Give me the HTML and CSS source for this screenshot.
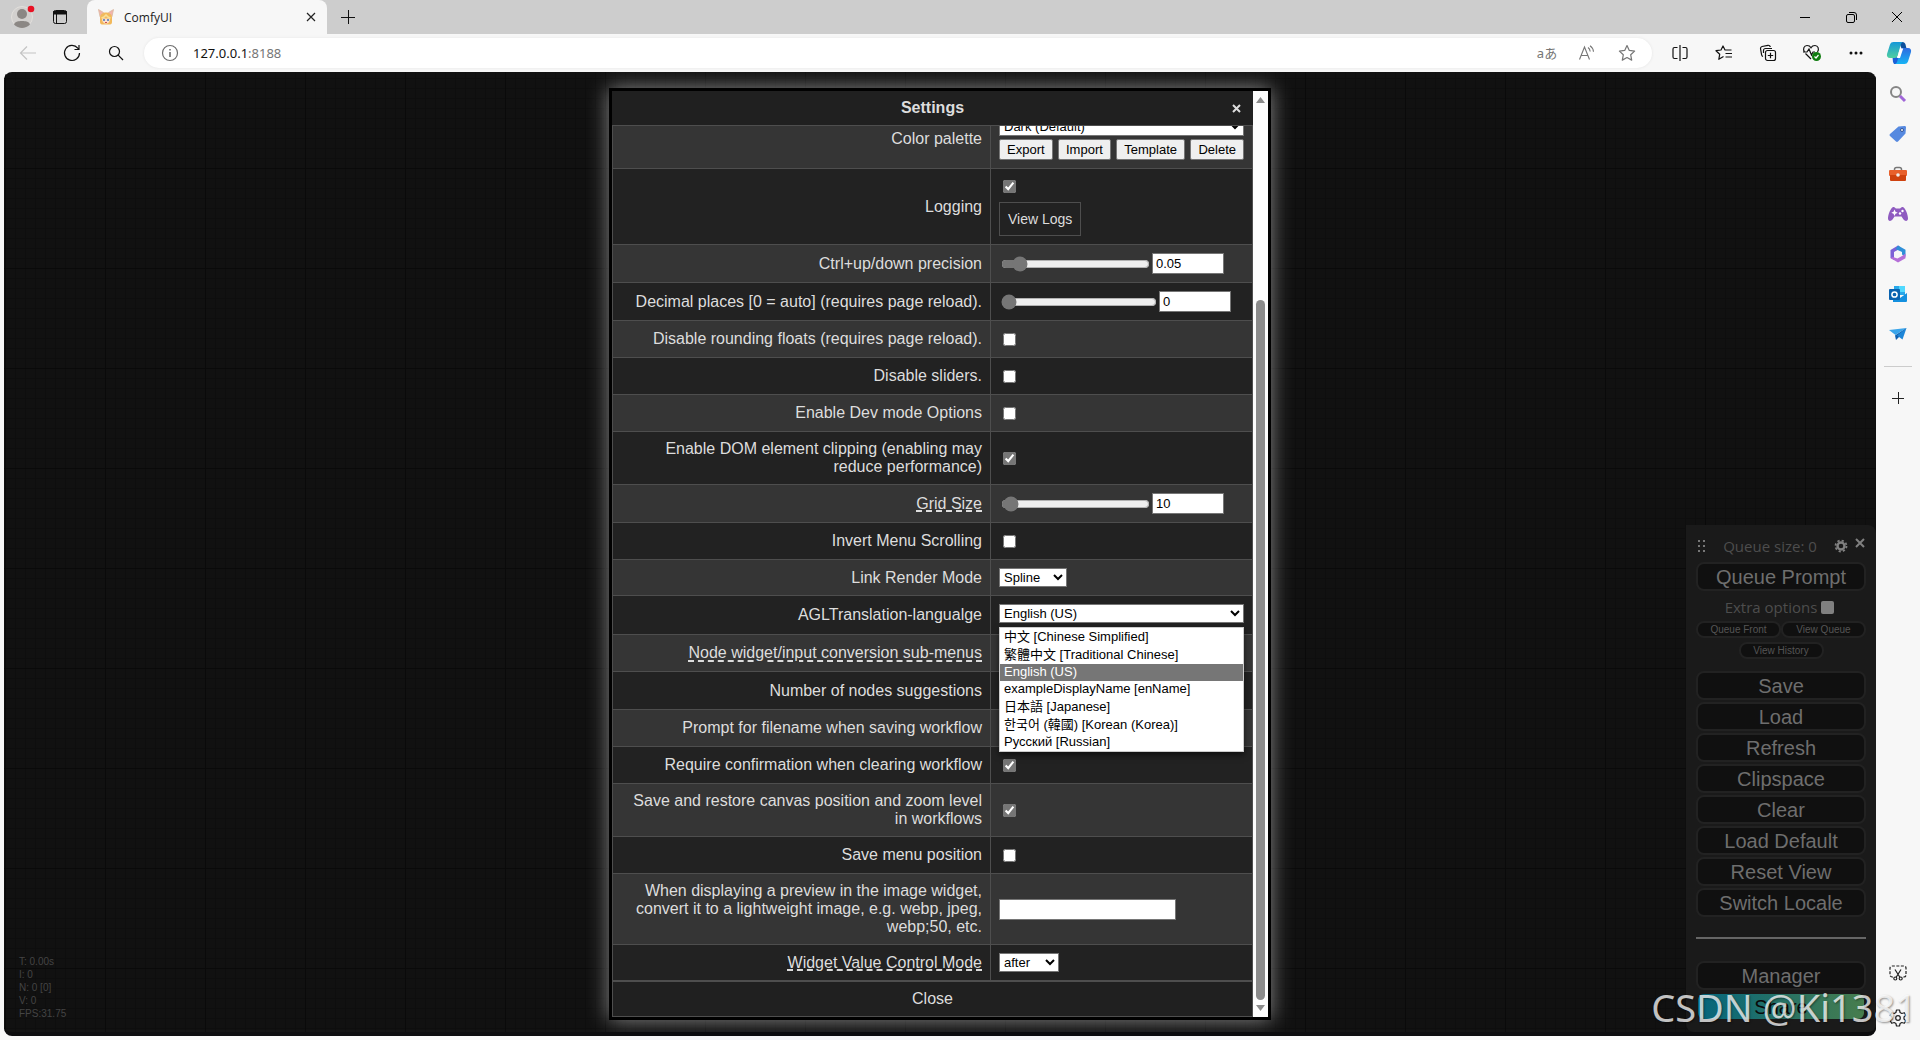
FILE: index.html
```html
<!DOCTYPE html>
<html lang="en">
<head>
<meta charset="utf-8">
<title>ComfyUI</title>
<link rel="stylesheet" href="styles.css">
</head>
<body class="browser">

<header class="tabbar">
  <button class="avatar" aria-label="Profile">
    <svg width="26" height="26" viewBox="0 0 26 26"><circle cx="13" cy="13" r="10.5" fill="#d2d0ce" stroke="#e2dfdc"/><circle cx="13" cy="10" r="5" fill="#8b8784"/><path d="M5 20.500c1-3 4-3.500 8-3.500s7 .5 8 3.500c-2 2.300-5 3.500-8 3.500s-6-1.200-8-3.500z" fill="#8b8784"/><circle cx="22" cy="5" r="3.300" fill="#e81123"/></svg>
  </button>
  <button class="tab-actions" aria-label="Tab actions">
    <svg width="16" height="16" viewBox="0 0 16 16" fill="none" stroke="#111"><rect x="1.500" y="1.500" width="13" height="13" rx="2"/><path d="M1.500 2.500h13v2.500h-13z" fill="#111"/><path d="M4.500 5v9.500"/></svg>
  </button>
  <div class="tab">
    <svg class="favicon" width="16" height="16" viewBox="0 0 16 16"><path d="M.5 .5l5 3-3.500 4zM15.500 .5l-5 3 3.500 4z" fill="#f3b3ac" stroke="#d9b9a0" stroke-width=".8"/><path d="M2 9C2 5 5 3.500 8 3.500S14 5 14 9v4c0 2-1 2.500-3 2.500H5C3 15.500 2 15 2 13z" fill="#f2b95c"/><path d="M4 9.500h8c0 3.500-1.500 5-4 5s-4-1.500-4-5z" fill="#fbe0cf"/><path d="M3.500 9C5.500 8.500 7 7.500 8 6c1 1.500 2.500 2.500 4.500 3" stroke="#f9df98" fill="none" stroke-width="1.500"/><circle cx="6" cy="11" r="1" fill="#4a78b8"/><circle cx="10" cy="11" r="1" fill="#4a78b8"/><path d="M7 13.500h2" stroke="#d0504a"/></svg>
    <span class="tab-title">ComfyUI</span>
    <button class="tab-close" aria-label="Close tab"><svg width="10" height="10" viewBox="0 0 10 10" stroke="#222" stroke-width="1.200"><path d="M1 1l8 8M9 1l-8 8"/></svg></button>
  </div>
  <button class="new-tab" aria-label="New tab"><svg width="14" height="14" viewBox="0 0 14 14" stroke="#111"><path d="M7.500 0v14M0 7.500h14"/></svg></button>
  <div class="window-buttons">
    <button class="window-button" aria-label="Minimize"><svg width="10" height="10" viewBox="0 0 10 10" stroke="#000"><path d="M0 5.500h10"/></svg></button>
    <button class="window-button" aria-label="Restore"><svg width="11" height="11" viewBox="0 0 11 11" fill="none" stroke="#000"><rect x=".5" y="2.500" width="8" height="8" rx="1.500"/><path d="M3 .5h5a2.500 2.500 0 0 1 2.500 2.500v5"/></svg></button>
    <button class="window-button" aria-label="Close"><svg width="10" height="10" viewBox="0 0 10 10" stroke="#000"><path d="M0 0l10 10M10 0L0 10"/></svg></button>
  </div>
</header>

<nav class="toolbar">
  <button class="tool" aria-label="Back"><svg width="18" height="16" viewBox="0 0 18 16" fill="none" stroke="#c4c4c4" stroke-width="1.200"><path d="M17 8H1.500M8 1.500L1.500 8 8 14.500"/></svg></button>
  <button class="tool" aria-label="Refresh"><svg width="18" height="18" viewBox="0 0 18 18" fill="none" stroke="#111" stroke-width="1.200"><path d="M16.500 9A7.500 7.500 0 1 1 14.800 4.200L16 5.500M16 1v4.500h-4.500"/></svg></button>
  <button class="tool" aria-label="Search"><svg width="16" height="16" viewBox="0 0 16 16" fill="none" stroke="#111" stroke-width="1.200"><circle cx="6.500" cy="6.500" r="5"/><path d="M10.200 10.200L15 15"/></svg></button>
  <div class="address">
    <svg width="18" height="18" viewBox="0 0 18 18" fill="none" stroke="#6e6e6e" stroke-width="1.200"><circle cx="9" cy="9" r="7.500"/><path d="M9 8v5" stroke-width="1.600"/><path d="M9 5v1.600" stroke-width="1.600"/></svg>
    <span class="url">127.0.0.1<span class="port">:8188</span></span>
    <button class="in-address" aria-label="Translate"><span class="translate">aあ</span></button>
    <button class="in-address" aria-label="Read aloud"><svg width="18" height="16" viewBox="0 0 18 16" fill="none" stroke="#767676" stroke-width="1.100"><path d="M1.500 14.500L6.500 2l5 12.500M3.200 10.500h6.600M10 2.500c1.500 1 2 2 2.200 4M12 .8c2.200 1.500 3.300 3.500 3.500 6"/></svg></button>
    <button class="in-address" aria-label="Add to favorites"><svg width="18" height="18" viewBox="0 0 18 18" fill="none" stroke="#767676" stroke-width="1.200" stroke-linejoin="round"><path d="M9 1.500l2.300 4.900 5.300.7-3.900 3.700 1 5.300L9 13.500l-4.700 2.600 1-5.300L1.400 7.100l5.300-.7z"/></svg></button>
  </div>
  <div class="extensions">
    <button class="tool" aria-label="Split screen"><svg width="16" height="16" viewBox="0 0 16 16" fill="none" stroke="#111" stroke-width="1.200"><path d="M5.500 2.500h-3a1.500 1.500 0 0 0-1.500 1.500v8a1.500 1.500 0 0 0 1.500 1.500h3M10.500 2.500h3a1.500 1.500 0 0 1 1.500 1.500v8a1.500 1.500 0 0 1-1.500 1.500h-3M8 0v16"/></svg></button>
    <button class="tool" aria-label="Favorites"><svg width="18" height="16" viewBox="0 0 18 16" fill="none" stroke="#111" stroke-width="1.200" stroke-linejoin="round"><path d="M8.500 11.500l-4.700 2.800.9-5L1 5.700l5-.7L8 1l2 4h6.500M10.500 8.500H17M10.500 12H17"/></svg></button>
    <button class="tool" aria-label="Collections"><svg width="18" height="18" viewBox="0 0 18 18" fill="none" stroke="#111" stroke-width="1.200"><path d="M4 12.500a2 2 0 0 1-1.400-1.700L1.500 4.500A2 2 0 0 1 3 2.500l6-1.200A2 2 0 0 1 11.300 3"/><path d="M4.500 9V6.500a2 2 0 0 1 2-2H13"/><rect x="6.500" y="6.500" width="10" height="10" rx="2"/><path d="M11.500 8.800v5.400M8.800 11.500h5.400"/></svg></button>
    <button class="tool" aria-label="Browser essentials"><svg width="20" height="18" viewBox="0 0 20 18" fill="none" stroke="#111" stroke-width="1.200"><path d="M2.500 8C.5 5 2 1.500 5 1.500c2 0 3.300 1 4 2.200.7-1.200 2-2.200 4-2.200 3 0 4.500 3.500 2.500 6.500M3.500 9.500L9 15M1 8h4l2-3 2.500 6L11 8h2"/><circle cx="14.500" cy="12.500" r="4.500" fill="#107c10" stroke="none"/><path d="M12.500 12.500l1.500 1.500 2.500-3" stroke="#fff"/></svg></button>
    <button class="tool" aria-label="Settings and more"><svg width="14" height="4" viewBox="0 0 14 4" fill="#111"><circle cx="2" cy="2" r="1.500"/><circle cx="7" cy="2" r="1.500"/><circle cx="12" cy="2" r="1.500"/></svg></button>
    <button class="copilot" aria-label="Copilot"><svg width="26" height="24" viewBox="0 0 26 24"><defs><linearGradient id="cp1" x1="0" y1="0" x2="0" y2="1"><stop offset="0" stop-color="#1598d8"/><stop offset="1" stop-color="#4fd0a0"/></linearGradient><linearGradient id="cp2" x1="0" y1="0" x2="0" y2="1"><stop offset="0" stop-color="#2f6be0"/><stop offset="1" stop-color="#16b4f5"/></linearGradient></defs><path d="M13 1h3.500c1.500 0 2.500 1 3 2.500l1 4h-5z" fill="#0d4f9c"/><path d="M8 23h4l2-7H6.500L7 21z" fill="#1c5fd8"/><path d="M7.500 1H17c-1.500.5-2 1.500-2.500 3.500L12 14c-.6 2-1.500 3-3.500 3H4c-2.500 0-3.500-2-3-4L4 3.500C4.600 1.800 6 1 7.500 1z" fill="url(#cp1)"/><path d="M18.500 23H9c1.500-.5 2-1.500 2.500-3.500L14 10c.6-2 1.500-3 3.500-3H22c2.500 0 3.500 2 3 4l-3 9.500c-.6 1.700-2 2.500-3.500 2.500z" fill="url(#cp2)"/><path d="M12.800 11l1.400-3.500h3L14 17h-3.500c1.200-1 1.600-2.500 2.300-6z" fill="#fff"/></svg></button>
  </div>
</nav>

<div class="workspace">
  <main class="page">
    <div class="stats">T: 0.00s<br>I: 0<br>N: 0 [0]<br>V: 0<br>FPS:31.75</div>

    <section class="settings" aria-label="Settings">
      <div class="settings-main">
        <header class="settings-header">
          <h1 class="settings-title">Settings</h1>
          <button class="settings-x" aria-label="Close settings"><svg width="9" height="9" viewBox="0 0 9 9" stroke="#ddd" stroke-width="2"><path d="M1 1l7 7M8 1L1 8"/></svg></button>
        </header>
        <div class="settings-scroll">
          <table class="settings-table">
            <tr class="row-palette"><th><label for="palette">Color palette</label></th>
              <td><div class="palette"><select id="palette" class="wide"><option>Dark (Default)</option></select>
                <div class="palette-buttons"><button>Export</button><button>Import</button><button>Template</button><button>Delete</button></div></div></td></tr>
            <tr class="row-logging"><th><label for="logging">Logging</label></th>
              <td><div class="logging"><input type="checkbox" id="logging" checked><button class="view-logs">View Logs</button></div></td></tr>
            <tr class="row-tall"><th><label for="precision">Ctrl+up/down precision</label></th>
              <td><div class="slider"><input class="range" type="range" id="precision" min="0.01" max="0.5" step="0.01" value="0.05"><input class="number" type="text" value="0.05" aria-label="Precision value"></div></td></tr>
            <tr class="row-tall"><th><label for="decimals">Decimal places [0 = auto] (requires page reload).</label></th>
              <td><div class="slider"><input class="range long" type="range" id="decimals" min="0" max="8" value="0"><input class="number" type="text" value="0" aria-label="Decimal places value"></div></td></tr>
            <tr><th><label for="rounding">Disable rounding floats (requires page reload).</label></th><td><input type="checkbox" id="rounding"></td></tr>
            <tr><th><label for="sliders">Disable sliders.</label></th><td><input type="checkbox" id="sliders"></td></tr>
            <tr><th><label for="devmode">Enable Dev mode Options</label></th><td><input type="checkbox" id="devmode"></td></tr>
            <tr class="row-double"><th><label for="clipping">Enable DOM element clipping (enabling may reduce performance)</label></th><td><input type="checkbox" id="clipping" checked></td></tr>
            <tr class="row-tall"><th><label class="hint" for="grid">Grid Size</label></th>
              <td><div class="slider"><input class="range" type="range" id="grid" min="1" max="500" value="10"><input class="number" type="text" value="10" aria-label="Grid size value"></div></td></tr>
            <tr><th><label for="invert">Invert Menu Scrolling</label></th><td><input type="checkbox" id="invert"></td></tr>
            <tr class="row-short"><th><label for="render">Link Render Mode</label></th><td><select id="render" class="spline"><option>Spline</option></select></td></tr>
            <tr class="row-language"><th><label for="language">AGLTranslation-langualge</label></th>
              <td><div class="language"><select id="language" class="wide"><option>English (US)</option></select>
                <ul class="options" role="listbox" aria-label="Languages">
                  <li class="option cjk" role="option">中文 [Chinese Simplified]</li>
                  <li class="option cjk" role="option">繁體中文 [Traditional Chinese]</li>
                  <li class="option selected" role="option" aria-selected="true">English (US)</li>
                  <li class="option" role="option">exampleDisplayName [enName]</li>
                  <li class="option cjk" role="option">日本語 [Japanese]</li>
                  <li class="option cjk" role="option">한국어 (韓國) [Korean (Korea)]</li>
                  <li class="option" role="option">Русский [Russian]</li>
                </ul></div></td></tr>
            <tr><th><label class="hint" for="submenus">Node widget/input conversion sub-menus</label></th><td><input type="checkbox" id="submenus"></td></tr>
            <tr class="row-tall"><th><label for="suggestions">Number of nodes suggestions</label></th><td><input type="checkbox" id="suggestions"></td></tr>
            <tr><th><label for="filename">Prompt for filename when saving workflow</label></th><td><input type="checkbox" id="filename"></td></tr>
            <tr><th><label for="confirm">Require confirmation when clearing workflow</label></th><td><input type="checkbox" id="confirm" checked></td></tr>
            <tr class="row-double"><th><label for="canvas">Save and restore canvas position and zoom level in workflows</label></th><td><input type="checkbox" id="canvas" checked></td></tr>
            <tr><th><label for="menupos">Save menu position</label></th><td><input type="checkbox" id="menupos"></td></tr>
            <tr class="row-triple"><th><label for="preview">When displaying a preview in the image widget, convert it to a lightweight image, e.g. webp, jpeg, webp;50, etc.</label></th><td><input class="preview" type="text" id="preview"></td></tr>
            <tr class="row-short"><th><label class="hint" for="control">Widget Value Control Mode</label></th><td><select id="control" class="after"><option>after</option></select></td></tr>
          </table>
        </div>
        <button class="settings-close">Close</button>
      </div>
      <div class="scrollbar" aria-hidden="true">
        <svg width="9" height="6" viewBox="0 0 9 6"><path d="M4.500 0L9 6H0z" fill="#8b8b8b"/></svg>
        <div class="track"><div class="thumb"></div></div>
        <svg width="9" height="6" viewBox="0 0 9 6"><path d="M4.500 6L9 0H0z" fill="#8b8b8b"/></svg>
      </div>
    </section>

    <aside class="menu">
      <div class="menu-head">
        <svg width="8" height="14" viewBox="0 0 8 14" fill="#777"><path d="M0 1h2v2H0zM5 1h2v2H5zM0 6h2v2H0zM5 6h2v2H5zM0 11h2v2H0zM5 11h2v2H5z"/></svg>
        <span class="queue-size">Queue size: 0</span>
        <button class="menu-icon" aria-label="Settings"><svg width="14" height="14" viewBox="0 0 14 14" fill="none" stroke="#808080"><circle cx="7" cy="7" r="3.500" stroke-width="2.400"/><circle cx="7" cy="7" r="5.500" stroke-width="1.800" stroke-dasharray="2.200 2.120"/></svg></button>
        <button class="menu-icon menu-x" aria-label="Close menu"><svg width="10" height="10" viewBox="0 0 10 10" stroke="#808080" stroke-width="2"><path d="M1 1l8 8M9 1L1 9"/></svg></button>
      </div>
      <button class="menu-button">Queue Prompt</button>
      <div class="extra"><label for="extra">Extra options</label><input type="checkbox" id="extra"></div>
      <div class="small-buttons">
        <button class="small-button">Queue Front</button><button class="small-button">View Queue</button><button class="small-button">View History</button>
      </div>
      <div class="menu-group">
        <button class="menu-button">Save</button>
        <button class="menu-button">Load</button>
        <button class="menu-button">Refresh</button>
        <button class="menu-button">Clipspace</button>
        <button class="menu-button">Clear</button>
        <button class="menu-button">Load Default</button>
        <button class="menu-button">Reset View</button>
        <button class="menu-button">Switch Locale</button>
      </div>
      <hr class="menu-rule">
      <div class="menu-group">
        <button class="menu-button">Manager</button>
        <button class="menu-button share">Share</button>
      </div>
    </aside>
  </main>

  <aside class="sidebar">
    <button class="side" aria-label="Search"><svg width="18" height="18" viewBox="0 0 18 18" fill="none"><circle cx="7" cy="7" r="5" stroke="#858585" stroke-width="2"/><path d="M11 11l5 5" stroke="#a066d8" stroke-width="3"/></svg></button>
    <button class="side" aria-label="Shopping"><svg width="18" height="18" viewBox="0 0 18 18"><path d="M9.500 1.500l6-.5c1 0 1.500.5 1.500 1.500l-.5 6-7.500 8c-.6.600-1.400.6-2 0l-6-5.500c-.6-.6-.6-1.400 0-2z" fill="#5689e0"/><circle cx="13" cy="5" r="1.500" fill="#fff" stroke="#2f5296"/></svg></button>
    <button class="side" aria-label="Tools"><svg width="18" height="16" viewBox="0 0 18 16"><path d="M5.500 5V3.500a2 2 0 0 1 2-2h3a2 2 0 0 1 2 2V5" fill="none" stroke="#777" stroke-width="1.500"/><rect y="4" width="18" height="6" rx="1" fill="#e8602c"/><path d="M1 9h16v5a1 1 0 0 1-1 1H2a1 1 0 0 1-1-1z" fill="#cf420f"/><circle cx="9" cy="9" r="1.800" fill="#eee"/></svg></button>
    <button class="side" aria-label="Games"><svg width="20" height="16" viewBox="0 0 20 16"><path d="M5 1c1.500-.5 2.500 1 3 1.500h4C12.500 2 13.500.5 15 1c2.500 1 5 8 5 11.500 0 3-3 3-4.500 1l-2-3h-7l-2 3C3 15.500 0 15.500 0 12.500 0 9 2.500 2 5 1z" fill="#8f5bc0"/><path d="M6.500 3.500l1 2.200 2.200 1-2.200 1-1 2.300-1-2.300-2.200-1 2.200-1z" fill="#fff"/><circle cx="14.500" cy="5" r="1.200" fill="#fff"/><circle cx="12" cy="7.500" r="1.200" fill="#fff"/></svg></button>
    <button class="side" aria-label="Microsoft 365"><svg width="18" height="18" viewBox="0 0 18 18"><path d="M9 .5L1.500 5v8L5 15V7l5.500-3V1.200z" fill="#7d62d6"/><path d="M9 .5l7.500 4.300v7L13 9.500V7L6.500 4z" fill="#2f8fd8"/><path d="M16.500 8.500v4.700L9 17.500 1.500 13l2.500-1 4.500 1.500L13 11z" fill="#b56fd8"/><circle cx="9" cy="9" r="3" fill="#f7f7f7"/></svg></button>
    <button class="side" aria-label="Outlook"><svg width="18" height="16" viewBox="0 0 18 16"><path d="M5 0h11v9H5z" fill="#28a8ea"/><path d="M10 0h6v6h-6z" fill="#50d9ff"/><path d="M4 7l7 5 7-5v8a1 1 0 0 1-1 1H4z" fill="#1490df"/><rect y="3" width="11" height="11" rx="1" fill="#0a63b0"/><circle cx="5.500" cy="8.500" r="2.600" fill="none" stroke="#fff" stroke-width="1.500"/></svg></button>
    <button class="side" aria-label="Drop"><svg width="18" height="16" viewBox="0 0 18 16"><path d="M0 4L17.500 2 6.500 9z" fill="#3aa5ea"/><path d="M17.500 2L6 9.500 7 14l3-3z" fill="#0c5fb0"/><path d="M17.500 2L8 9.500l5.500 4z" fill="#1d86d8"/></svg></button>
    <hr class="side-rule">
    <button class="side" aria-label="Customize"><svg width="12" height="12" viewBox="0 0 12 12" stroke="#222"><path d="M6.500 0v12M0 6.500h12"/></svg></button>
    <div class="side-bottom">
      <button class="side" aria-label="Screenshot"><svg width="18" height="16" viewBox="0 0 18 16" fill="none" stroke="#222" stroke-width="1.200"><path d="M4 12H3a2 2 0 0 1-2-2V3a2 2 0 0 1 2-2h12a2 2 0 0 1 2 2v7a2 2 0 0 1-2 2h-1" stroke-dasharray="3 1.500"/><path d="M6 4.500l5 8M12 4.500l-5 8"/><circle cx="6.300" cy="13.500" r="1.500"/><circle cx="11.700" cy="13.500" r="1.500"/></svg></button>
      <button class="side" aria-label="Sidebar settings"><svg width="18" height="18" viewBox="0 0 18 18" fill="none" stroke="#222" stroke-width="1.200" stroke-linejoin="round"><path d="M7.500 1h3l.6 2.500 1.700 1 2.500-.8 1.500 2.600L15 8v2l1.800 1.700-1.500 2.600-2.500-.8-1.700 1-.6 2.500h-3l-.6-2.500-1.700-1-2.500.8-1.500-2.600L3 10V8L1.200 6.300l1.500-2.600 2.500.8 1.700-1z"/><circle cx="9" cy="9" r="2.300"/></svg></button>
    </div>
  </aside>
</div>

<div class="watermark">CSDN @Ki1381</div>
</body>
</html>
```
FILE: styles.css
```css
* { box-sizing: border-box; }

html { height: 100%; overflow: hidden; }

.browser {
  margin: 0;
  height: 100%;
  display: flex;
  flex-direction: column;
  overflow: hidden;
  position: relative;
  background: #f7f7f7;
  font-family: "Liberation Sans", "Noto Sans CJK SC", sans-serif;
}

button { font-family: inherit; }

/* Tab strip */
.tabbar {
  display: flex;
  align-items: center;
  height: 34px;
  flex: none;
  background: #cdcdcd;
}

.avatar, .tab-actions, .tab-close, .new-tab, .window-button, .tool, .in-address,
.copilot, .side, .menu-icon, .settings-x {
  display: flex;
  align-items: center;
  justify-content: center;
  padding: 0;
  border: 0;
  background: none;
}

.avatar { width: 44px; height: 34px; }
.tab-actions { width: 32px; height: 34px; margin-right: 11px; }

.tab {
  display: flex;
  align-items: center;
  width: 240px;
  height: 34px;
  padding: 0 11px;
  gap: 10px;
  border-radius: 8px 8px 0 0;
  background: #f7f7f7;
}

.tab-title {
  flex: 1;
  color: #1b1b1b;
  font: 12px "Open Sans", sans-serif;
}

.new-tab { width: 42px; height: 34px; }
.window-buttons { display: flex; margin-left: auto; }
.window-button { width: 46px; height: 34px; }

/* Toolbar */
.toolbar {
  display: flex;
  align-items: center;
  height: 38px;
  flex: none;
  padding-left: 6px;
}

.tool { width: 44px; height: 38px; }

.address {
  display: flex;
  align-items: center;
  flex: 1;
  height: 30px;
  margin-left: 6px;
  padding: 0 5px 0 17px;
  border-radius: 15px;
  background: #fff;
  box-shadow: 0 0 3px #e4e4e4;
}

.url {
  flex: 1;
  margin-left: 14px;
  color: #111;
  font: 13px "Noto Sans", sans-serif;
}

.port { color: #767676; }
.in-address { width: 40px; height: 30px; }
.translate { color: #767676; font: 13px "Noto Sans", "Noto Sans CJK JP", sans-serif; line-height: 14px; }
.extensions { display: flex; width: 268px; padding-left: 6px; }
.copilot { width: 42px; height: 38px; }

/* Work area */
.workspace {
  display: flex;
  flex: 1;
  min-height: 0;
}

.page {
  position: relative;
  display: flex;
  flex: 1;
  align-items: center;
  justify-content: center;
  margin: 0 0 4px 4px;
  overflow: hidden;
  border-radius: 8px;
  border-bottom: 4px solid #0b0b0d;
  background:
    linear-gradient(90deg, #0a0a0a 1px, transparent 1px) 1px 0 / 100px 100px,
    linear-gradient(#0a0a0a 1px, transparent 1px) 0 -4px / 100px 100px,
    linear-gradient(90deg, #0e0e0e 1px, transparent 1px) 1px 0 / 10px 10px,
    linear-gradient(#0e0e0e 1px, transparent 1px) 0 6px / 10px 10px,
    #111;
}

.stats {
  position: absolute;
  left: 15px;
  bottom: 12px;
  color: #444;
  font-size: 10px;
  line-height: 13px;
}

/* Settings dialog */
.settings {
  display: flex;
  width: 662px;
  height: calc(100% - 28px);
  margin-top: 4px;
  border: 3px solid #000;
  background: #202020;
  box-shadow: 0 0 20px #888;
  color: #ddd;
}

.settings-main {
  display: flex;
  flex: 1;
  flex-direction: column;
  min-width: 0;
}

.settings-header {
  position: relative;
  flex: none;
  height: 35px;
  border-bottom: 1px solid #4e4e4e;
}

.settings-title {
  margin: 0;
  font-size: 16px;
  line-height: 33px;
  text-align: center;
}

.settings-x {
  position: absolute;
  top: 0;
  right: 0;
  width: 34px;
  height: 34px;
}

.settings-scroll {
  display: flex;
  flex: 1;
  flex-direction: column;
  justify-content: flex-end;
  min-height: 0;
  overflow: hidden;
}

.settings-table {
  width: 100%;
  flex: none;
  border-spacing: 0;
  table-layout: fixed;
}

.settings-table tr { height: 37px; background: #222; }
.settings-table tr:nth-child(odd) { background: #353535; }
.settings-table .row-short { height: 36px; }
.settings-table .row-tall { height: 38px; }
.settings-table .row-language { height: 39px; }
.settings-table .row-double { height: 53px; }
.settings-table .row-triple { height: 71px; }
.settings-table .row-logging { height: 76px; }
.settings-table .row-palette { height: 60px; }

.settings-table th,
.settings-table td {
  padding: 0 8px;
  border: 0 solid #4e4e4e;
  border-bottom-width: 1px;
  vertical-align: middle;
}

.settings-table th {
  width: 379px;
  border-left-width: 1px;
  border-right-width: 1px;
  font-size: 16px;
  font-weight: 400;
  line-height: 18px;
  text-align: right;
}

.settings-table td { border-right-width: 1px; line-height: 0; }
.settings-table .row-language td { padding-bottom: 4px; }

.hint {
  text-decoration: underline dashed 2px;
  text-underline-offset: 2px;
}

.settings input[type="checkbox"] {
  margin: 3px 3px 3px 4px;
  accent-color: #767676;
}

.settings select,
.palette-buttons button,
.slider .number,
.preview {
  font: 13px "Liberation Sans", sans-serif;
}

.settings select {
  height: 19px;
  padding: 0;
  border: 1px solid #767676;
  border-radius: 0;
  background-color: #fff;
  color: #000;
}

.settings .wide { width: 245px; }
.settings .spline { width: 68px; }
.settings .after { width: 60px; }

.palette { display: flex; flex-direction: column; gap: 3px; }
.palette-buttons { display: flex; justify-content: space-between; width: 245px; }

.palette-buttons button {
  height: 21px;
  padding: 0 7px;
  border: 1px solid #767676;
  border-radius: 2px;
  background: #efefef;
  color: #000;
}

.logging { display: flex; flex-direction: column; align-items: flex-start; gap: 6px; }

.view-logs {
  height: 34px;
  padding: 0 8px;
  border: 1px solid #4e4e4e;
  background: #222;
  color: #ddd;
  font-size: 14px;
}

.slider { display: flex; align-items: center; gap: 2px; }
.range { width: 149px; margin: 0 0 0 2px; accent-color: #767676; }
.long { width: 156px; }

.number, .preview {
  height: 21px;
  padding: 0 3px;
  border: 1px solid #767676;
  background: #fff;
  color: #000;
}

.number { width: 72px; }
.preview { width: 177px; }

.language { position: relative; }

.options {
  position: absolute;
  top: 23px;
  left: 0;
  z-index: 1;
  width: 245px;
  margin: 0;
  padding: 0;
  border: 1px solid #ccc;
  background: #fff;
  box-shadow: 0 3px 6px #0008;
  color: #000;
  font-size: 13px;
  list-style: none;
}

.option { height: 17px; padding-left: 4px; line-height: 15px; white-space: nowrap; }
.cjk { height: 18px; line-height: 18px; }
.selected { background: #767676; color: #fff; }

.settings-close {
  flex: none;
  height: 36px;
  padding: 0;
  border: 1px solid #4e4e4e;
  background: #202020;
  color: #ddd;
  font-size: 16px;
}

.scrollbar {
  display: flex;
  flex-direction: column;
  align-items: center;
  gap: 5px;
  width: 15px;
  padding: 6px 0;
  background: #fcfcfc;
}

.track { display: flex; flex: 1; align-items: flex-end; }
.thumb { width: 9px; height: calc(78% + 4px); border-radius: 5px; background: #8b8b8b; }

/* Floating queue menu */
.menu {
  position: absolute;
  right: 0;
  bottom: 0;
  display: flex;
  flex-direction: column;
  width: 190px;
  padding: 8px 10px 11px;
  border-radius: 0 8px 8px 8px;
  background: #1a1a1a;
  color: #4d4d4d;
}

.menu-head {
  display: flex;
  align-items: center;
  height: 25px;
  margin: 0 -6px 4px 0;
  padding-left: 2px;
}

.queue-size, .extra { font: 15px "Open Sans", sans-serif; }
.queue-size { flex: 1; text-align: center; }
.menu-icon { width: 14px; height: 20px; }
.menu-x { width: 24px; padding-bottom: 5px; }

.menu-button {
  width: 100%;
  height: 29px;
  padding: 0;
  border: 2px solid #222;
  border-radius: 8px;
  background: #101010;
  color: #6e6e6e;
  font-size: 20px;
  line-height: 24px;
}

.extra {
  display: flex;
  align-items: center;
  justify-content: center;
  height: 30px;
  padding-top: 2px;
}

.extra input {
  appearance: none;
  width: 13px;
  height: 13px;
  margin: 0 3px 0 4px;
  border-radius: 2px;
  background: #808080;
}

.small-buttons {
  display: flex;
  flex-wrap: wrap;
  justify-content: center;
  gap: 4px 0;
  margin-bottom: 12px;
}

.small-button {
  width: 50%;
  height: 17px;
  padding: 0;
  border: 2px solid #222;
  border-radius: 8px;
  background: #101010;
  color: #555;
  font-size: 10px;
  line-height: 13px;
}

.menu-group { display: flex; flex-direction: column; gap: 2px; }

.menu-rule {
  width: 100%;
  height: 2px;
  margin: 20px 0 22px;
  border: 0;
  background: #666;
}

.share {
  border-color: #1a1a1a;
  background: linear-gradient(90deg, #05667d, #477d4d);
  color: #0a0a0a;
}

/* Edge sidebar */
.sidebar {
  display: flex;
  flex-direction: column;
  align-items: center;
  width: 44px;
  padding: 2px 0;
}

.side { width: 40px; height: 40px; }
.side-rule { width: 28px; height: 1px; margin: 12px 0 11px; border: 0; background: #ccc; }
.side-bottom { display: flex; flex-direction: column; gap: 5px; margin-top: auto; }

.watermark {
  position: absolute;
  right: 3px;
  bottom: 8px;
  color: #ffffffbf;
  font: 38px "Noto Sans", sans-serif;
  line-height: 50px;
  text-shadow: 1px 1px 2px #0006;
  pointer-events: none;
}
```
